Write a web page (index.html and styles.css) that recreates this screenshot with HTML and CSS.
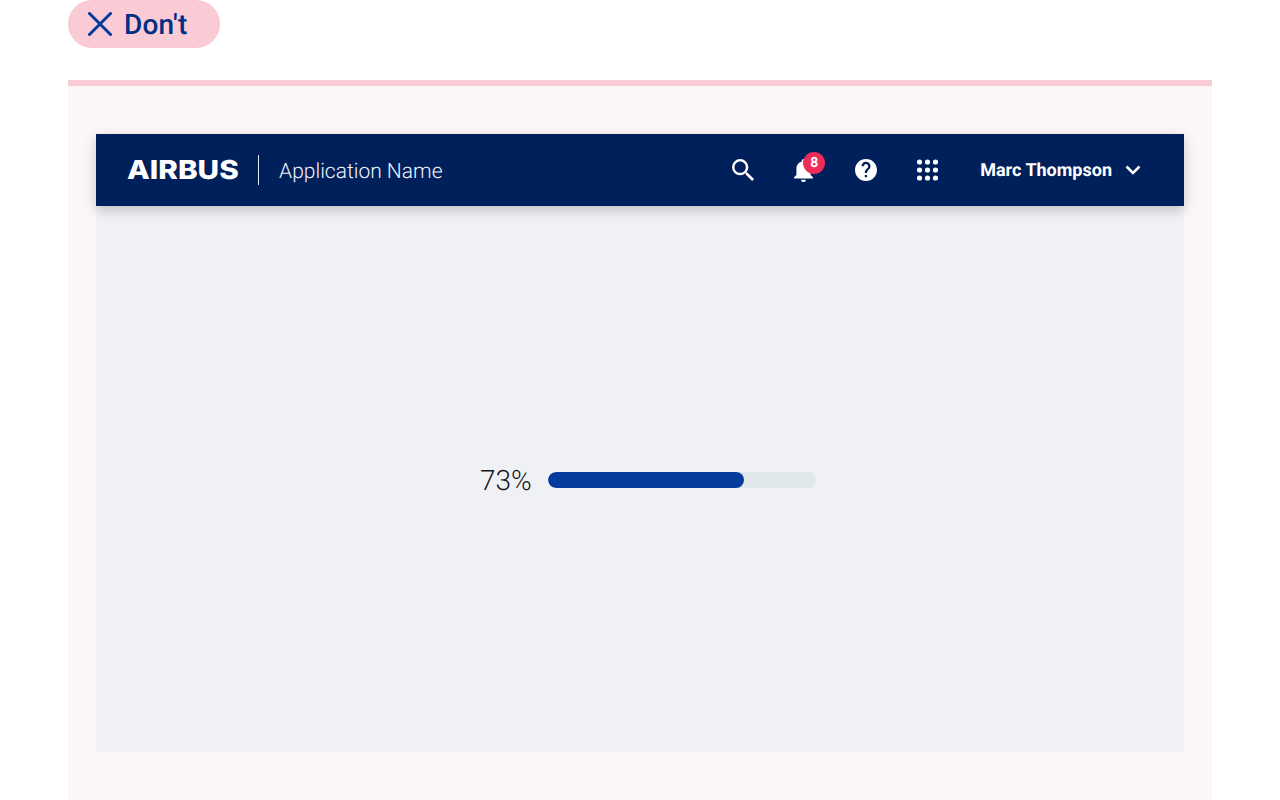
FILE: index.html
```html
<!DOCTYPE html>
<html lang="en">
<head>
<meta charset="utf-8">
<title>Don't example</title>
<link rel="stylesheet" href="styles.css">
</head>
<body>
<main class="page">
  <div class="tag">
    <svg class="tag-icon" width="24" height="24" viewBox="0 0 24 24"><path d="M1.500 1.500 22.500 22.500M22.500 1.500 1.500 22.500" fill="none" stroke="#063b9e" stroke-width="3" stroke-linecap="round"/></svg>
    <span>Don't</span>
  </div>
  <section class="panel">
    <div class="app">
      <header class="bar">
        <span class="logo">AIRBUS</span>
        <span class="divider"></span>
        <span class="app-name">Application Name</span>
        <nav class="actions">
          <svg class="icon icon-search" width="22" height="22" viewBox="3 3 17.500 17.500"><path fill="#fff" d="M15.500 14h-.79l-.28-.27A6.470 6.470 0 0 0 16 9.500 6.500 6.500 0 1 0 9.500 16c1.610 0 3.090-.59 4.230-1.570l.27.28v.79l5 4.990L20.490 19l-4.990-5zm-6 0C7.010 14 5 11.990 5 9.500S7.010 5 9.500 5 14 7.010 14 9.500 11.990 14 9.500 14z"/></svg>
          <span class="bell">
            <svg class="icon" width="19" height="23" viewBox="4 2.500 16 19.500"><path fill="#fff" d="M12 22c1.100 0 2-.9 2-2h-4c0 1.100.9 2 2 2zm6-6v-5c0-3.070-1.630-5.640-4.500-6.320V4c0-.83-.67-1.500-1.500-1.500s-1.500.67-1.500 1.500v.68C7.640 5.360 6 7.920 6 11v5l-2 2v1h16v-1l-2-2z"/></svg>
            <span class="badge">8</span>
          </span>
          <svg class="icon icon-help" width="22" height="22" viewBox="1 1 22 22"><path fill="#fff" d="M12 1C5.900 1 1 5.900 1 12s4.900 11 11 11 11-4.900 11-11S18.100 1 12 1zm1.100 18.200h-2.300v-2.300h2.300v2.300zm2.300-8.300-1 1c-.8.800-1.300 1.500-1.300 3.100h-2.300v-.6c0-1.200.5-2.300 1.300-3.100l1.400-1.400c.4-.4.700-1 .7-1.600 0-1.200-1-2.200-2.200-2.200S9.800 7.100 9.800 8.300H7.500c0-2.500 2-4.500 4.500-4.500s4.500 2 4.500 4.500c0 1-.4 1.900-1.100 2.600z"/></svg>
          <svg class="icon icon-grid" width="21" height="22" viewBox="0 0 21 22" fill="#fff"><circle cx="2.500" cy="3" r="2.600"/><circle cx="10.500" cy="3" r="2.600"/><circle cx="18.500" cy="3" r="2.600"/><circle cx="2.500" cy="11" r="2.600"/><circle cx="10.500" cy="11" r="2.600"/><circle cx="18.500" cy="11" r="2.600"/><circle cx="2.500" cy="19" r="2.600"/><circle cx="10.500" cy="19" r="2.600"/><circle cx="18.500" cy="19" r="2.600"/></svg>
          <span class="user">Marc Thompson</span>
          <svg class="chevron" width="24" height="24" viewBox="0 0 24 24"><path d="M5.500 8.500 12 15l6.500-6.500" fill="none" stroke="#fff" stroke-width="2.500"/></svg>
        </nav>
      </header>
      <div class="content">
        <div class="progress">
          <span class="value">73%</span>
          <div class="track"><div class="fill" style="width:73.2%"></div></div>
        </div>
      </div>
    </div>
  </section>
</main>
</body>
</html>
```
FILE: styles.css
```css
* { box-sizing: border-box; }
html, body { margin: 0; height: 800px; overflow: hidden; background: #fff; }
body { font-family: Roboto, "Liberation Sans", sans-serif; text-rendering: geometricPrecision; }
.page { display: flex; flex-direction: column; align-items: flex-start; padding: 0 68px; height: 800px; }
.tag {
  display: flex; align-items: center; gap: 12px;
  width: 152px; height: 48px; padding-left: 20px;
  background: #facbd4; border-radius: 24px;
  color: #002f87; font-size: 28px; font-weight: 500; line-height: 48px; letter-spacing: .2px;
}
.tag span { margin-top: 2px; }
.tag-icon { flex: none; }
.panel {
  width: 1144px; height: 720px; margin-top: 32px; padding: 48px 28px;
  background: #fdf6f6; border-top: 6px solid #facbd4;
}
.app { height: 618px; display: flex; flex-direction: column; background: #eff1f5; }
.bar {
  flex: none; display: flex; align-items: center; height: 72px; padding: 0 39px 0 31px;
  background: #00205b; color: #fff; position: relative;
  box-shadow: 0 4px 12px rgba(0, 0, 0, .2);
}
.logo {
  width: 111px; font-family: Inter, Roboto, sans-serif; font-size: 26px; font-weight: 800;
  line-height: 30px; color: #fff; white-space: nowrap; margin-top: 2px;
  transform: scaleX(1.14); transform-origin: left center;
}
.divider { width: 1px; height: 30px; margin: 0 20px; background: #e4e9f4; }
.app-name { font-size: 21px; font-weight: 300; color: #eef2fb; margin-top: 4px; }
.actions { margin-left: auto; display: flex; align-items: center; }
.icon { display: block; flex: none; }
.icon-search { margin-right: 40px; }
.bell { position: relative; width: 19px; height: 23px; margin-right: 42px; }
.icon-help { margin-right: 40px; }
.icon-grid { margin-right: 42px; }
.badge {
  position: absolute; left: 9px; top: -7px; width: 22px; height: 22px; border-radius: 50%;
  background: #ee2d5b; color: #fff; font-size: 14px; font-weight: 700; line-height: 22px; text-align: center;
}
.user { font-size: 18px; font-weight: 700; color: #fff; }
.chevron { margin-left: 9px; flex: none; }
.content { flex: 1; display: flex; align-items: center; padding-left: 384px; padding-top: 4px; }
.progress { display: flex; align-items: center; gap: 16px; }
.value { font-size: 28px; font-weight: 300; color: #15181f; line-height: 32px; }
.track { width: 268px; height: 16px; border-radius: 8px; background: #e0e8ea; overflow: hidden; margin-top: -2px; }
.fill { height: 100%; background: #063b9e; border-radius: 8px; }
```
